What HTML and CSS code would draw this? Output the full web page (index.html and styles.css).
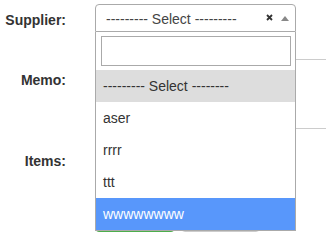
FILE: index.html
```html
<!DOCTYPE html>
<html lang="en">
<head>
<meta charset="utf-8">
<title>Supplier form</title>
<link rel="stylesheet" href="styles.css">
</head>
<body>
<div class="page">
  <form class="form">
    <div class="row row-supplier">
      <label class="label">Supplier:</label>
      <div class="field">
        <div class="select2">
          <div class="choice">
            <span class="chosen">--------- Select ---------</span>
            <span class="clear"><svg width="7" height="7" viewBox="0 0 7 7"><path d="M1 1 L6 6 M6 1 L1 6" stroke="#333" stroke-width="1.8" fill="none"/></svg></span>
            <span class="arrow"><svg width="8" height="5" viewBox="0 0 8 5"><path d="M0 5 L4 0 L8 5 Z" fill="#888"/></svg></span>
          </div>
          <div class="drop">
            <div class="search"><input class="search-input" type="text"></div>
            <ul class="results">
              <li class="opt opt-selected">--------- Select --------</li>
              <li class="opt">aser</li>
              <li class="opt">rrrr</li>
              <li class="opt">ttt</li>
              <li class="opt opt-highlighted">wwwwwwww</li>
            </ul>
          </div>
        </div>
      </div>
    </div>
    <div class="row row-memo">
      <label class="label">Memo:</label>
      <div class="field">
        <textarea class="memo"></textarea>
      </div>
    </div>
    <div class="row row-items">
      <label class="label">Items:</label>
      <div class="field">
        <div class="items-table"></div>
        <div class="buttons">
          <button type="button" class="btn btn-success" aria-label="Add item"></button>
          <button type="button" class="btn btn-default" aria-label="Remove item"></button>
        </div>
      </div>
    </div>
  </form>
</div>
</body>
</html>
```
FILE: styles.css
```css
html, body {
  margin: 0;
  padding: 0;
  background: #fff;
}
.page {
  width: 326px;
  height: 242px;
  overflow: hidden;
  font-family: "Liberation Sans", Arial, sans-serif;
  font-size: 14px;
  color: #333;
}
.form {
  margin: 0;
  padding-top: 4px;
}
.row {
  display: grid;
  grid-template-columns: 66px 1fr;
  column-gap: 29px;
  align-items: start;
}
.label {
  font-weight: bold;
  text-align: right;
  line-height: 20px;
  color: #333;
  white-space: nowrap;
}
.row-supplier .label { padding-top: 6px; }
.row-memo { margin-top: 27px; }
.row-memo .label { padding-top: 11px; }
.row-items { margin-top: 21px; }
.row-items .label { padding-top: 1px; }

.field {
  min-width: 0;
}

/* select2 */
.select2 {
  position: relative;
  width: 201px;
  z-index: 10;
}
.choice {
  box-sizing: border-box;
  height: 28px;
  border: 1px solid #aaa;
  border-radius: 4px 4px 0 0;
  background: #fff;
  display: flex;
  align-items: center;
  padding: 1px 0 0 10px;
  color: #444;
  line-height: 26px;
}
.chosen {
  flex: 1;
  white-space: nowrap;
  overflow: hidden;
}
.clear {
  display: flex;
  width: 7px;
  height: 7px;
  margin-right: 8px;
  margin-top: -2px;
}
.arrow {
  display: flex;
  width: 8px;
  height: 5px;
  margin-right: 6px;
}
.drop {
  position: absolute;
  left: 0;
  top: 100%;
  width: 201px;
  box-sizing: border-box;
  background: #fff;
  border: 1px solid #aaa;
  border-top: 0;
}
.search {
  padding: 4px 4px 4px 5px;
}
.search-input {
  display: block;
  box-sizing: border-box;
  width: 190px;
  height: 30px;
  margin: 0;
  border: 1px solid #aaa;
  border-radius: 0;
  padding: 4px 5px;
  font: inherit;
  outline: none;
  background: #fff;
}
.results {
  list-style: none;
  margin: 0;
  padding: 0;
}
.opt {
  height: 32px;
  line-height: 32px;
  padding-left: 7px;
  color: #333;
  white-space: nowrap;
}
.opt-selected {
  background: #ddd;
}
.opt-highlighted {
  background: #5897fb;
  color: #fff;
}

/* memo */
.memo {
  display: block;
  box-sizing: border-box;
  width: 300px;
  height: 70px;
  margin: 0;
  border: 1px solid #ccc;
  border-radius: 4px;
  resize: none;
  font: inherit;
}

/* items */
.items-table {
  height: 48px;
}
.buttons {
  display: flex;
  gap: 6px;
}
.btn {
  box-sizing: border-box;
  height: 34px;
  border-radius: 4px;
  border: 1px solid #ccc;
  padding: 0;
}
.btn-success {
  width: 80px;
  background: #5cb85c;
  border-color: #4cae4c;
}
.btn-default {
  width: 79px;
  background: #fff;
}
```
